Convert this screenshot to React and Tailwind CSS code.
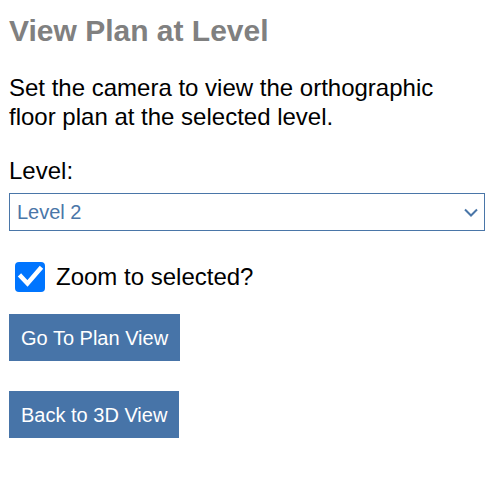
import React from "react";

const Chevron = () => (
  <svg width="14" height="9" viewBox="0 0 14 9" fill="none">
    <path d="M1 1.5 L7 7.5 L13 1.5" stroke="#4a76a8" strokeWidth="2" />
  </svg>
);

const CheckBox = () => (
  <div className="w-[30px] h-[30px] rounded-[4px] bg-[#0075ff] flex items-center justify-center shrink-0">
    <svg width="30" height="30" viewBox="0 0 30 30" fill="none">
      <path d="M6 14.5 L12.5 21.5 L25 7" stroke="white" strokeWidth="4.5" strokeLinecap="square" />
    </svg>
  </div>
);

const App = () => {
  return (
    <div className="pl-[9px] pr-[14px] font-['Liberation_Sans',Arial,sans-serif] text-black bg-white">
      <h2 className="pt-[13px] text-[30px] leading-[36px] font-bold text-[#808080]">View Plan at Level</h2>
      <p className="mt-[24px] text-[24px] leading-[29px]">
        Set the camera to view the orthographic floor plan at the selected level.
      </p>
      <div className="mt-[26px] text-[24px] leading-[28px]">Level:</div>
      <div className="mt-[8px] h-[38px] border border-[#4a76a8] flex items-center justify-between pl-[7px] pr-[6px] text-[20px] text-[#4a76a8]">
        <span>Level 2</span>
        <Chevron />
      </div>
      <label className="mt-[31px] ml-[6px] flex items-center gap-[11px] text-[24px] leading-[28px]">
        <CheckBox />
        <span>Zoom to selected?</span>
      </label>
      <div className="mt-[22px] flex flex-col items-start gap-[30px]">
        <button className="h-[47px] px-3 bg-[#4774a8] text-white text-[20px]">Go To Plan View</button>
        <button className="h-[47px] px-3 bg-[#4774a8] text-white text-[20px]">Back to 3D View</button>
      </div>
    </div>
  );
};

export default App;
